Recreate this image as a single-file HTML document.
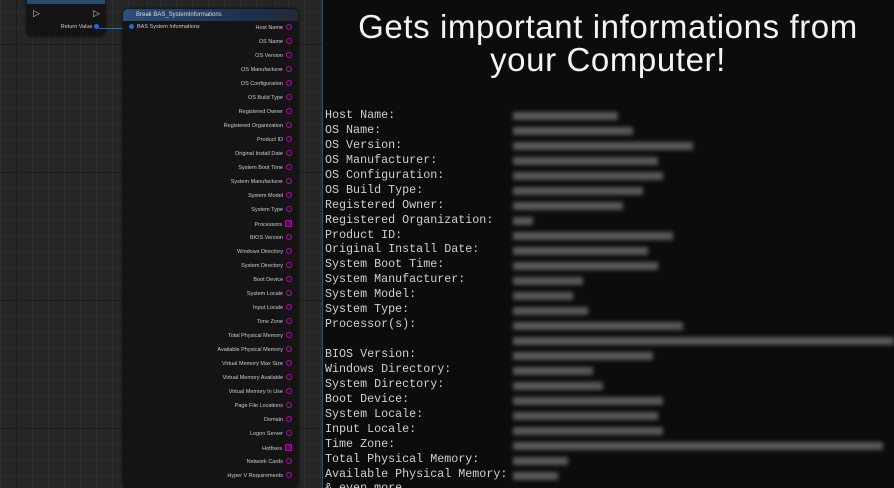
<!DOCTYPE html><html><head><style>
html,body{margin:0;width:894px;height:488px;overflow:hidden}
body{background:#0c0c0c;font-family:"Liberation Sans",sans-serif;position:relative}
#graph{position:absolute;left:0;top:0;width:322px;height:488px;background-color:#262626;background-image:linear-gradient(#1c1c1c 1px,transparent 1px),linear-gradient(90deg,#1c1c1c 1px,transparent 1px),linear-gradient(#2e2e2e 1px,transparent 1px),linear-gradient(90deg,#2e2e2e 1px,transparent 1px);background-size:128px 128px,128px 128px,16px 16px,16px 16px;background-position:0 44px,16px 0,0 44px,16px 0}
#edge{position:absolute;left:322px;top:0;width:1px;height:488px;background:#1d5a6a}
.node{position:absolute;background:#141414;border-radius:5px;box-shadow:0 0 3px #000}
.hdr{position:absolute;left:0;top:0;right:0;height:12px;border-radius:5px 5px 0 0;background:linear-gradient(90deg,#2d4f7a,#1a3050 70%,#242a33);color:#ddd;font-size:6px;line-height:12px;padding-left:13px}
.row{position:absolute;right:8px;font-size:5.5px;color:#ccc;height:8px;line-height:8px;white-space:nowrap}
.row i{display:inline-block;width:4px;height:4px;border:1.2px solid #c000c0;border-radius:50%;margin-left:3px;vertical-align:-1px}
.row b{display:inline-block;width:5px;height:5px;border:1px solid #c000c0;background:#600060;margin-left:3px;vertical-align:-1px}
#con{position:absolute;left:325px;top:108px;font-family:"Liberation Mono",monospace;font-size:11.7px;line-height:14.93px;color:#d0d0d0;white-space:pre}
.blur{position:absolute;background:#5a5a5a;filter:blur(2px);height:8px}
#title{position:absolute;left:322px;width:572px;top:10px;text-align:center;color:#f4f4f4;font-size:33px;line-height:33px;letter-spacing:0.6px}
</style></head><body>
<div id="graph"></div>
<div id="edge"></div>
<div class="node" style="left:27px;top:-6px;width:78px;height:42px">
<div class="hdr" style="background:#2a4d6e;height:10px"></div>
<div style="position:absolute;left:6px;top:14px;color:#ccc;font-size:9px">▷</div>
<div style="position:absolute;left:66px;top:14px;color:#ccc;font-size:9px">▷</div>
<div style="position:absolute;right:6px;top:30px;font-size:5.5px;color:#ccc">Return Value <span style="display:inline-block;width:5px;height:5px;border-radius:50%;background:#1a6fe0;vertical-align:-1px"></span></div>
</div>
<div style="position:absolute;left:99px;top:28px;width:33px;height:1px;background:#1a6fe0"></div>
<div class="node" style="left:123px;top:9px;width:175px;height:479px">
<div class="hdr">Break BAS_SystemInformations</div>
<div style="position:absolute;left:6px;top:15px;font-size:5.5px;color:#ccc"><span style="display:inline-block;width:5px;height:5px;border-radius:50%;background:#1a6fe0;vertical-align:-1px;margin-right:3px"></span>BAS System Informations</div>
</div>
<div id="rows"></div>
<script>
var n=["Host Name","OS Name","OS Version","OS Manufacturer","OS Configuration","OS Build Type","Registered Owner","Registered Organization","Product ID","Original Install Date","System Boot Time","System Manufacturer","System Model","System Type","Processors","BIOS Version","Windows Directory","System Directory","Boot Device","System Locale","Input Locale","Time Zone","Total Physical Memory","Available Physical Memory","Virtual Memory Max Size","Virtual Memory Available","Virtual Memory In Use","Page File Locations","Domain","Logon Server","Hotfixes","Network Cards","Hyper V Requirements"];
var h="";n.forEach(function(t,i){var a=(t=="Processors"||t=="Hotfixes")?"<b></b>":"<i></i>";h+='<div class="row" style="left:0;width:292px;text-align:right;top:'+(24+i*14)+'px;position:absolute">'+t+a+'</div>';});
document.getElementById("rows").innerHTML=h;
</script>
<div id="title">Gets important informations from<br>your Computer!</div>
<div id="con">Host Name:
OS Name:
OS Version:
OS Manufacturer:
OS Configuration:
OS Build Type:
Registered Owner:
Registered Organization:
Product ID:
Original Install Date:
System Boot Time:
System Manufacturer:
System Model:
System Type:
Processor(s):

BIOS Version:
Windows Directory:
System Directory:
Boot Device:
System Locale:
Input Locale:
Time Zone:
Total Physical Memory:
Available Physical Memory:
&amp; even more...</div>
<div class="blur" style="left:513px;top:112px;width:105px"></div>
<div class="blur" style="left:513px;top:127px;width:120px"></div>
<div class="blur" style="left:513px;top:142px;width:180px"></div>
<div class="blur" style="left:513px;top:157px;width:145px"></div>
<div class="blur" style="left:513px;top:172px;width:150px"></div>
<div class="blur" style="left:513px;top:187px;width:130px"></div>
<div class="blur" style="left:513px;top:202px;width:110px"></div>
<div class="blur" style="left:513px;top:217px;width:20px"></div>
<div class="blur" style="left:513px;top:232px;width:160px"></div>
<div class="blur" style="left:513px;top:247px;width:135px"></div>
<div class="blur" style="left:513px;top:262px;width:145px"></div>
<div class="blur" style="left:513px;top:277px;width:70px"></div>
<div class="blur" style="left:513px;top:292px;width:60px"></div>
<div class="blur" style="left:513px;top:307px;width:75px"></div>
<div class="blur" style="left:513px;top:322px;width:170px"></div>
<div class="blur" style="left:513px;top:337px;width:381px"></div>
<div class="blur" style="left:513px;top:352px;width:140px"></div>
<div class="blur" style="left:513px;top:367px;width:80px"></div>
<div class="blur" style="left:513px;top:382px;width:90px"></div>
<div class="blur" style="left:513px;top:397px;width:150px"></div>
<div class="blur" style="left:513px;top:412px;width:145px"></div>
<div class="blur" style="left:513px;top:427px;width:150px"></div>
<div class="blur" style="left:513px;top:442px;width:370px"></div>
<div class="blur" style="left:513px;top:457px;width:55px"></div>
<div class="blur" style="left:513px;top:472px;width:45px"></div>
</body></html>
